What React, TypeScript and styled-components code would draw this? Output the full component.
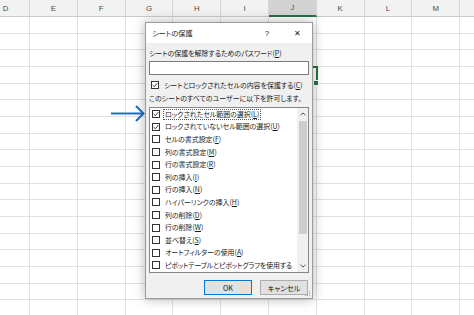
import styled, { createGlobalStyle } from "styled-components";

const GlobalStyle = createGlobalStyle`
  html, body {
    margin: 0;
    padding: 0;
    background: #fff;
  }
`;

const COLS = ["D", "E", "F", "G", "H", "I", "J", "K", "L", "M", ""];
const ROW_COUNT = 18;
const ACTIVE_COL = "J";
const ACTIVE_ROW = 3;

const ITEMS = [
  { text: "ロックされたセル範囲の選択", key: "L", checked: true, focused: true },
  { text: "ロックされていないセル範囲の選択", key: "U", checked: true },
  { text: "セルの書式設定", key: "F" },
  { text: "列の書式設定", key: "M" },
  { text: "行の書式設定", key: "R" },
  { text: "列の挿入", key: "I" },
  { text: "行の挿入", key: "N" },
  { text: "ハイパーリンクの挿入", key: "H" },
  { text: "列の削除", key: "D" },
  { text: "行の削除", key: "W" },
  { text: "並べ替え", key: "S" },
  { text: "オートフィルターの使用", key: "A" },
  { text: "ピボットテーブルとピボットグラフを使用する" },
];

const Page = styled.div`
  position: relative;
  width: 474px;
  height: 315px;
  overflow: hidden;
  background: #fff;
`;

const Sheet = styled.div`
  margin-left: -17.8px;
`;

const HeaderRow = styled.div`
  display: flex;
  height: 17px;
  background: #f2f2f2;
`;

const ColHead = styled.div<{ $active?: boolean }>`
  flex: 0 0 47.8px;
  box-sizing: border-box;
  display: flex;
  align-items: center;
  justify-content: center;
  border-right: 1px solid #d6d6d6;
  border-bottom: ${(p) => (p.$active ? "2px solid #217346" : "1px solid #c9c9c9")};
  background: ${(p) => (p.$active ? "#d3d3d3" : "transparent")};
  font-family: "Liberation Sans", Arial, sans-serif;
  font-size: 7.8px;
  color: ${(p) => (p.$active ? "#217346" : "#4a4a4a")};
`;

const GridRow = styled.div`
  display: flex;
  height: 16.67px;
`;

const Cell = styled.div<{ $selected?: boolean }>`
  position: relative;
  flex: 0 0 47.8px;
  box-sizing: border-box;
  border-right: 1px solid #e1e1e1;
  border-bottom: 1px solid #e1e1e1;
  ${(p) =>
    p.$selected &&
    `
    z-index: 1;
    outline: 2px solid #217346;
    outline-offset: -1px;
    &::after {
      content: "";
      position: absolute;
      right: -3px;
      bottom: -3px;
      width: 4px;
      height: 4px;
      background: #217346;
      border: 1px solid #fff;
    }
  `}
`;

const Dialog = styled.div`
  position: absolute;
  z-index: 5;
  left: 145px;
  top: 22px;
  width: 168px;
  height: 277px;
  box-sizing: border-box;
  display: flex;
  flex-direction: column;
  background: #f0f0f0;
  border: 1px solid #9b9b9b;
  box-shadow: 0 0 11px rgba(0, 0, 0, 0.3);
  font-family: "Noto Sans CJK JP", "Noto Sans", sans-serif;
  font-size: 6.95px;
  font-feature-settings: "palt";
  color: #1a1a1a;
`;

const TitleBar = styled.div`
  display: flex;
  align-items: center;
  height: 20px;
  background: #fff;
  padding-left: 6px;
`;

const TitleText = styled.span`
  flex: 1;
  font-size: 7.2px;
`;

const TitleButton = styled.span<{ $w: number }>`
  width: ${(p) => p.$w}px;
  display: flex;
  align-items: center;
  justify-content: center;
  font-family: "Liberation Sans", Arial, sans-serif;
  font-size: 8px;
  color: #222;
`;

const Body = styled.div`
  flex: 1;
  display: flex;
  flex-direction: column;
  padding: 0 3px;
  position: relative;
`;

const TextRow = styled.div<{ $mt: number }>`
  display: flex;
  align-items: center;
  height: 12px;
  margin-top: ${(p) => p.$mt}px;
  white-space: nowrap;
`;

const Password = styled.div`
  height: 14px;
  margin-top: 2px;
  box-sizing: border-box;
  background: #fff;
  border: 1px solid #7a7a7a;
`;

const Box = styled.span<{ $ml?: number }>`
  flex: 0 0 8px;
  width: 8px;
  height: 8px;
  box-sizing: border-box;
  margin-left: ${(p) => p.$ml ?? 0}px;
  margin-right: 5px;
  border: 1px solid #333;
  background: #fff;
  display: flex;
  align-items: center;
  justify-content: center;
  svg {
    display: block;
  }
`;

const ListBox = styled.div`
  display: flex;
  height: 166px;
  margin-top: 3px;
  box-sizing: border-box;
  background: #fff;
  border: 1px solid #828790;
`;

const Items = styled.div`
  flex: 1;
  display: flex;
  flex-direction: column;
  overflow: hidden;
`;

const Item = styled.div`
  display: flex;
  align-items: center;
  height: 12.6px;
  flex: 0 0 12.6px;
  padding-left: 2px;
  white-space: nowrap;
`;

const ItemLabel = styled.span<{ $focused?: boolean; $tight?: boolean }>`
  margin-left: ${(p) => (p.$focused ? -2 : 0)}px;
  padding: ${(p) => (p.$focused ? "0 1px" : "0")};
  border: ${(p) => (p.$focused ? "1px dotted #555" : "none")};
  letter-spacing: ${(p) => (p.$tight ? "-0.15px" : "0")};
  line-height: 9px;
`;

const ScrollBar = styled.div`
  flex: 0 0 11px;
  display: flex;
  flex-direction: column;
  align-items: center;
  background: #f0f0f0;
`;

const ScrollArrow = styled.div`
  height: 12px;
  width: 100%;
  display: flex;
  align-items: center;
  justify-content: center;
`;

const Thumb = styled.div`
  width: 8px;
  height: 113px;
  margin-top: 1px;
  background: #cdcdcd;
`;

const Spacer = styled.div`
  flex: 1;
`;

const Buttons = styled.div`
  display: flex;
  justify-content: flex-end;
  gap: 8px;
  margin-top: 7px;
  padding-right: 1px;
`;

const Button = styled.div<{ $primary?: boolean }>`
  width: 48px;
  height: 15px;
  box-sizing: border-box;
  display: flex;
  align-items: center;
  justify-content: center;
  background: #e1e1e1;
  border: 1px solid ${(p) => (p.$primary ? "#0078d7" : "#adadad")};
  font-size: 7.2px;
`;

const Grip = styled.svg`
  position: absolute;
  right: 1px;
  bottom: 1px;
`;

const Arrow = styled.svg`
  position: absolute;
  left: 110px;
  top: 104px;
`;

const Check = () => (
  <svg width="6" height="6" viewBox="0 0 6 6">
    <path d="M0.6 3.1 L2.3 4.7 L5.4 1.1" fill="none" stroke="#222" strokeWidth="0.9" />
  </svg>
);

const CheckBox = ({ checked, ml }: { checked?: boolean; ml?: number }) => (
  <Box $ml={ml}>{checked && <Check />}</Box>
);

const Chevron = ({ up }: { up?: boolean }) => (
  <svg width="6" height="4" viewBox="0 0 6 4">
    <path
      d={up ? "M0.5 3.4 L3 0.9 L5.5 3.4" : "M0.5 0.6 L3 3.1 L5.5 0.6"}
      fill="none"
      stroke="#444"
      strokeWidth="0.9"
    />
  </svg>
);

const Key = ({ k }: { k?: string }) =>
  k ? (
    <>
      (<u>{k}</u>)
    </>
  ) : null;

export default function App() {
  return (
    <Page>
      <GlobalStyle />
      <Sheet>
        <HeaderRow>
          {COLS.map((c, i) => (
            <ColHead key={i} $active={c === ACTIVE_COL}>
              {c}
            </ColHead>
          ))}
        </HeaderRow>
        {Array.from({ length: ROW_COUNT }, (_, r) => (
          <GridRow key={r}>
            {COLS.map((c, i) => (
              <Cell key={i} $selected={r === ACTIVE_ROW && c === ACTIVE_COL} />
            ))}
          </GridRow>
        ))}
      </Sheet>

      <Dialog>
        <TitleBar>
          <TitleText>シートの保護</TitleText>
          <TitleButton $w={20}>?</TitleButton>
          <TitleButton $w={5} />
          <TitleButton $w={30}>✕</TitleButton>
        </TitleBar>
        <Body>
          <TextRow $mt={4}>
            シートの保護を解除するためのパスワード
            <Key k="P" />
          </TextRow>
          <Password />
          <TextRow $mt={4}>
            <CheckBox checked ml={2} />
            シートとロックされたセルの内容を保護する
            <Key k="C" />
          </TextRow>
          <TextRow $mt={1}>このシートのすべてのユーザーに以下を許可します。</TextRow>
          <ListBox>
            <Items>
              {ITEMS.map((it) => (
                <Item key={it.text}>
                  <CheckBox checked={it.checked} />
                  <ItemLabel $focused={it.focused} $tight={!it.key}>
                    {it.text}
                    <Key k={it.key} />
                  </ItemLabel>
                </Item>
              ))}
            </Items>
            <ScrollBar>
              <ScrollArrow>
                <Chevron up />
              </ScrollArrow>
              <Thumb />
              <Spacer />
              <ScrollArrow>
                <Chevron />
              </ScrollArrow>
            </ScrollBar>
          </ListBox>
          <Buttons>
            <Button $primary>OK</Button>
            <Button>キャンセル</Button>
          </Buttons>
          <Grip width="7" height="7" viewBox="0 0 7 7">
            {[
              [5.5, 1.5],
              [3.5, 3.5],
              [5.5, 3.5],
              [1.5, 5.5],
              [3.5, 5.5],
              [5.5, 5.5],
            ].map(([x, y]) => (
              <rect key={`${x}-${y}`} x={x - 0.5} y={y - 0.5} width="1" height="1" fill="#a0a0a0" />
            ))}
          </Grip>
        </Body>
      </Dialog>

      <Arrow width="38" height="20" viewBox="0 0 38 20">
        <path d="M1 9.5 H33" stroke="#1e6fc4" strokeWidth="2" fill="none" />
        <path d="M26 2 L33.5 9.5 L26 17" stroke="#1e6fc4" strokeWidth="2" fill="none" />
      </Arrow>
    </Page>
  );
}
